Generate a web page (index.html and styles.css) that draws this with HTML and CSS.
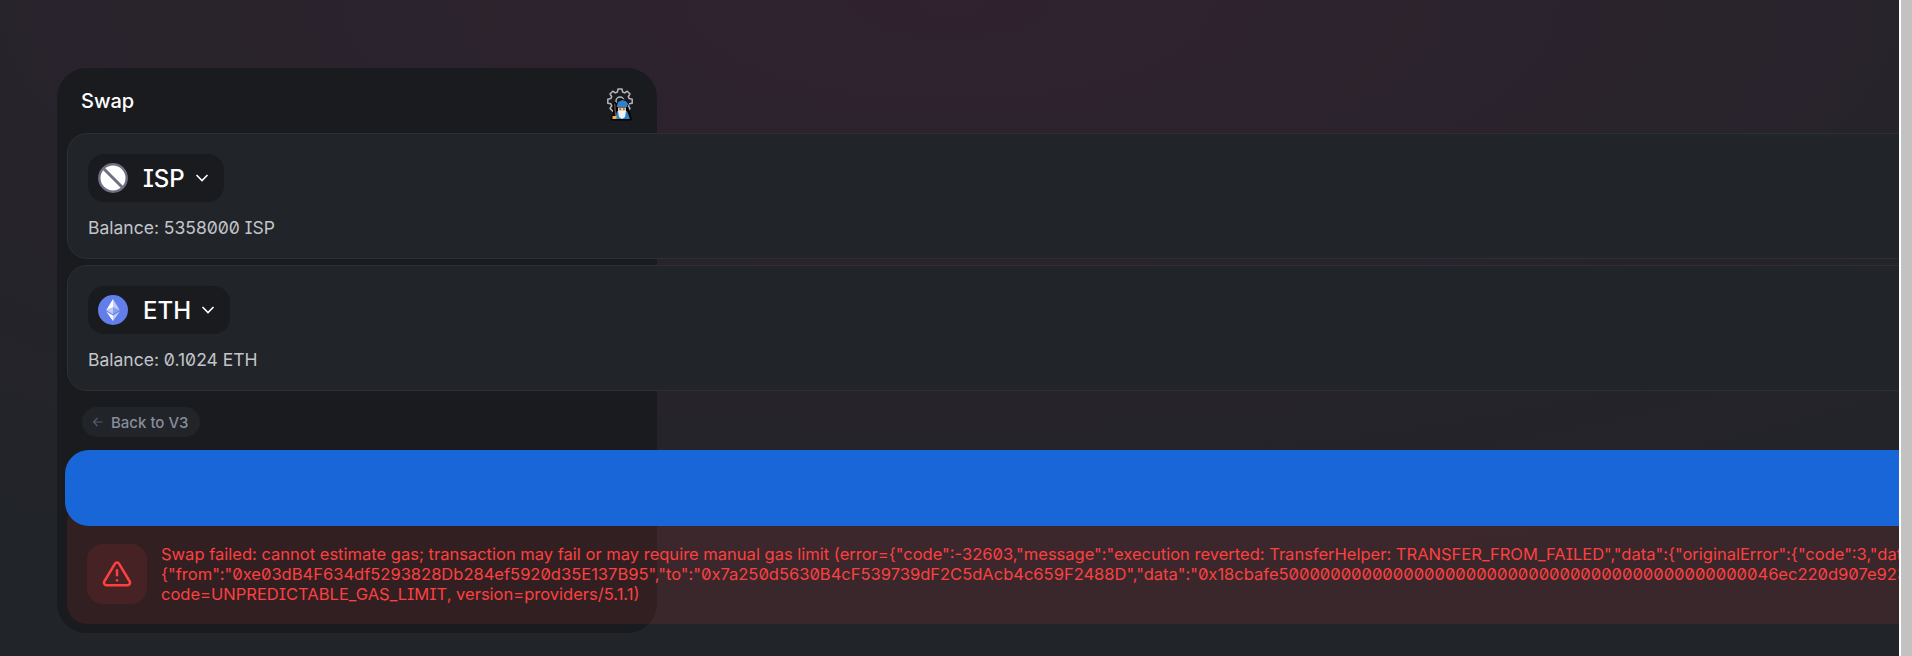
FILE: index.html
```html
<!DOCTYPE html>
<html>
<head>
    <link rel="stylesheet" href="styles.css">
</head>
<body>
    <div class="page">
        <div class="swap-card">
            <div class="swap-header">
                <span class="swap-title">Swap</span>
                <svg class="settings-icon" width="26" height="33" viewBox="0 0 26 33">
                    <g fill="none" stroke="#b4b6bc" stroke-width="1.500" stroke-linejoin="round">
                        <path d="M11 1h4l.6 3 2.100.9 2.500-1.700 2.800 2.800-1.700 2.500.9 2.100 3 .6v4l-3 .6-.9 2.100 1.700 2.500-2.800 2.800-2.500-1.700-2.100.9-.6 3h-4l-.6-3-2.100-.9-2.500 1.700-2.800-2.800 1.700-2.500-.9-2.100-3-.6v-4l3-.6.9-2.100-1.700-2.500 2.800-2.800 2.500 1.700 2.100-.9z"/>
                        <circle cx="13" cy="13" r="4"/>
                    </g>
                    <path d="M5 32v-4l1.500-1 .2-12 2.300-.5 1 2.500 1-3 4-2.500 4 1 3 4-2 .5.5 3 1 1 2.500 8.500V32z" fill="#000" stroke="#000" stroke-width="1"/>
                    <path d="M8 31l2-8h10l3 8z" fill="#2f80cc"/>
                    <path d="M9.500 19l1.500-5 4-2 4 1 3 4-2 0 .5 2z" fill="#2f80cc"/>
                    <path d="M11 19.500h8v3.500h-8z" fill="#f0c8a0"/>
                    <path d="M11 23h8l-1 6-3 2-3-2z" fill="#eceff3"/>
                    <path d="M12.500 20.500h1.200v1.200h-1.200zM16.300 20.500h1.200v1.200h-1.200z" fill="#222"/>
                    <path d="M7 15.500h1.300l1 12.500H8z" fill="#7a4f2a"/>
                    <path d="M5.500 28h4v3h-4z" fill="#f2b632"/>
                </svg>
            </div>

            <div class="token-panel">
                <button class="token-select">
                    <svg class="token-icon" viewBox="0 0 30 30">
                        <circle cx="15" cy="15" r="13.700" fill="#fff" stroke="#6c7080" stroke-width="2.400"/>
                        <path d="M6 6l18 18" stroke="#6c7080" stroke-width="3"/>
                    </svg>
                    <span class="token-name">ISP</span>
                    <svg class="chevron" width="14" height="8" viewBox="0 0 14 8">
                        <path d="M1.500 1l5.500 5.500L12.500 1" fill="none" stroke="#fff" stroke-width="1.600"/>
                    </svg>
                </button>
                <div class="balance">Balance: 5358000 ISP</div>
            </div>

            <div class="token-panel token-panel-second">
                <button class="token-select">
                    <svg class="token-icon" viewBox="0 0 30 30">
                        <circle cx="15" cy="15" r="15" fill="#627eea"/>
                        <path d="M15 4v8.200l6.800 3z" fill="#fff" fill-opacity=".6"/>
                        <path d="M15 4l-6.800 11.200 6.800-3z" fill="#fff"/>
                        <path d="M15 20.500V26l6.800-9.500z" fill="#fff" fill-opacity=".6"/>
                        <path d="M15 20.500V26l-6.800-9.500z" fill="#fff"/>
                        <path d="M15 19.200l6.800-4-6.800-3z" fill="#fff" fill-opacity=".25"/>
                        <path d="M8.200 15.200l6.800 4v-7z" fill="#fff" fill-opacity=".6"/>
                    </svg>
                    <span class="token-name">ETH</span>
                    <svg class="chevron" width="14" height="8" viewBox="0 0 14 8">
                        <path d="M1.500 1l5.500 5.500L12.500 1" fill="none" stroke="#fff" stroke-width="1.600"/>
                    </svg>
                </button>
                <div class="balance">Balance: 0.1024 ETH</div>
            </div>

            <div class="back-row">
                <a class="back-link">
                    <svg width="12" height="12" viewBox="0 0 12 12">
                        <path d="M10.500 6h-9M5.500 2l-4 4 4 4" fill="none" stroke="#565a69" stroke-width="1.200"/>
                    </svg>
                    Back to V3
                </a>
            </div>

            <button class="swap-button"></button>

            <div class="swap-error">
                <div class="error-icon">
                    <svg width="30" height="30" viewBox="0 0 24 24" fill="none" stroke="#fd4040" stroke-width="2" stroke-linecap="round" stroke-linejoin="round">
                        <path d="M10.290 3.860L1.820 18a2 2 0 0 0 1.710 3h16.940a2 2 0 0 0 1.710-3L13.710 3.860a2 2 0 0 0-3.420 0z"/>
                        <line x1="12" y1="9" x2="12" y2="13"/>
                        <line x1="12" y1="17" x2="12.010" y2="17"/>
                    </svg>
                </div>
                <div class="error-text">
                    <div>Swap failed: cannot estimate gas; transaction may fail or may require manual gas limit (error={"code":-32603,"message":"execution reverted: TransferHelper: TRANSFER_FROM_FAILED","data":{"originalError":{"code":3,"data":"0x08c379a0</div>
                    <div>{"from":"0xe03dB4F634df5293828Db284ef5920d35E137B95","to":"0x7a250d5630B4cF539739dF2C5dAcb4c659F2488D","data":"0x18cbafe500000000000000000000000000000000000000000000046ec220d907e92370000000</div>
                    <div>code=UNPREDICTABLE_GAS_LIMIT, version=providers/5.1.1)</div>
                </div>
            </div>
        </div>
    </div>
    <div class="scrollbar"></div>
</body>
</html>
```

FILE: styles.css
```css
html, body {
    margin: 0;
    height: 100%;
}

body {
    display: flex;
    height: 656px;
    overflow: hidden;
    font-family: 'Inter', sans-serif;
    font-feature-settings: 'zero', 'cv08';
    background: #fff;
}

.page {
    width: 1899px;
    flex: none;
    overflow: hidden;
    box-sizing: border-box;
    padding: 68px 0 0 57px;
    background: radial-gradient(1700px 640px at 950px 0, rgba(252,7,125,0.065) 0%, rgba(252,7,125,0) 100%), #212429;
}

.scrollbar {
    flex: 1;
    border-left: 2px solid #fff;
    background: #c2c2c2;
}

.swap-card {
    width: 600px;
    height: 565px;
    box-sizing: border-box;
    padding-top: 65px;
    border-radius: 30px;
    background: #191b1f;
    position: relative;
}

.swap-header {
    position: absolute;
    top: 19px;
    left: 24px;
    right: 24px;
    display: flex;
    justify-content: space-between;
    align-items: flex-start;
    color: #fff;
}

.swap-title {
    font-size: 20px;
    line-height: 28px;
    font-weight: 500;
}

.settings-icon {
    flex: none;
    display: block;
    margin-top: 1px;
}

.token-panel {
    width: 1860px;
    height: 126px;
    box-sizing: border-box;
    margin-left: 10px;
    padding: 20px;
    border: 1px solid #2c2f36;
    border-radius: 20px;
    background: #212429;
}

.token-panel-second {
    margin-top: 6px;
}

.token-select {
    display: inline-flex;
    align-items: center;
    height: 48px;
    padding: 0 15px 0 10px;
    border: 0;
    border-radius: 16px;
    background: #191b1f;
    color: #fff;
    font: inherit;
    font-feature-settings: inherit;
}

.token-icon {
    width: 30px;
    height: 30px;
}

.token-name {
    margin: 0 10px 0 15px;
    font-size: 24px;
    font-weight: 500;
}

.balance {
    margin-top: 16px;
    font-size: 17.500px;
    line-height: 20px;
    color: #c3c5cb;
}

.back-row {
    margin: 16px 0 13px 25px;
    height: 30px;
}

.back-link {
    display: inline-flex;
    align-items: center;
    gap: 7px;
    height: 30px;
    padding: 0 12px 0 10px;
    border-radius: 15px;
    background: #212429;
    color: #888d9b;
    font-size: 15px;
    font-weight: 500;
}

.swap-button {
    display: block;
    position: relative;
    z-index: 1;
    width: 1860px;
    height: 76px;
    margin-left: 8px;
    border: 0;
    border-radius: 24px;
    background: #1966d8;
}

.swap-error {
    display: flex;
    align-items: center;
    gap: 14px;
    width: 1860px;
    height: 122px;
    box-sizing: border-box;
    margin: -24px 0 0 10px;
    padding: 42px 20px 20px;
    border-radius: 20px;
    background: rgba(255,67,67,0.11);
    color: #fd4040;
    font-size: 16.520px;
    line-height: 20px;
}

.error-icon {
    flex: none;
    display: flex;
    align-items: center;
    justify-content: center;
    width: 60px;
    height: 60px;
    border-radius: 16px;
    background: rgba(255,67,67,0.1);
}

.error-text {
    white-space: nowrap;
    overflow: hidden;
}
```
